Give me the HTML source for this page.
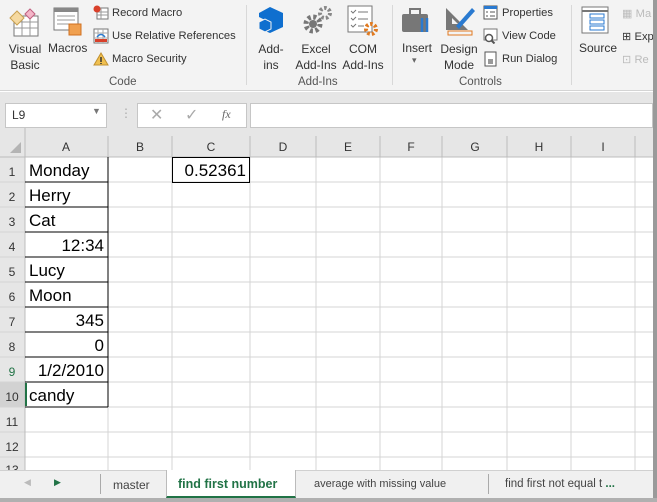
<!DOCTYPE html>
<html><head><meta charset="utf-8"><style>
*{margin:0;padding:0;box-sizing:border-box}
body{width:657px;height:502px;overflow:hidden;background:#fff;font-family:"Liberation Sans",sans-serif;position:relative;font-size:12px;color:#333}
.a{position:absolute}
.rib{left:0;top:0;width:653px;height:91px;background:#f3f3f3;border-bottom:1px solid #d4d4d4}
.t{position:absolute;font-size:12px;color:#333;white-space:nowrap}
.s{font-size:11.2px}
.c{text-align:center}
.grp{position:absolute;top:76px;font-size:11.5px;color:#555}
.sep{position:absolute;top:5px;width:1px;height:80px;background:#d8d8d8}
</style></head><body>
<div class="a rib"></div>
<!-- Code group -->
<svg class="a" style="left:8px;top:6px" width="32" height="32"><rect x="6" y="10" width="24" height="20" fill="#fff" stroke="#777"/><path d="M6 16h24M6 22h24M14 10v20M22 10v20" stroke="#999"/><path d="M2 12l7-7 7 7-7 7z" fill="#f5d9a0" stroke="#c9a050"/><path d="M17 8l5-5 5 5-5 5z" fill="#f4b6c8" stroke="#c06080"/></svg>
<div class="t c" style="left:2px;top:41px;width:46px;line-height:16px">Visual<br>Basic</div>
<svg class="a" style="left:52px;top:6px" width="32" height="32"><rect x="2" y="2" width="24" height="22" fill="#fff" stroke="#777"/><rect x="2" y="2" width="24" height="4" fill="#888"/><path d="M5 10h18M5 14h18M5 18h12" stroke="#999"/><rect x="17" y="18" width="12" height="11" fill="#f0a050" stroke="#d07020"/></svg>
<div class="t" style="left:48px;top:41px">Macros</div>
<svg class="a" style="left:93px;top:5px" width="16" height="16"><rect x="4" y="3" width="11" height="11" fill="#fff" stroke="#777"/><path d="M4 7h11M4 10h11M8 3v11" stroke="#999"/><circle cx="4" cy="4" r="3.5" fill="#d9402a"/></svg>
<div class="t s" style="left:112px;top:7px">Record Macro</div>
<svg class="a" style="left:93px;top:28px" width="16" height="16"><rect x="1" y="1" width="14" height="14" fill="#fff" stroke="#777"/><path d="M1 5h14M1 10h14M5 1v14M10 1v14" stroke="#aaa"/><path d="M4 9q4-5 8 0" stroke="#2a7ad0" fill="none" stroke-width="1.5"/><rect x="2" y="11" width="12" height="3" fill="#d9402a"/></svg>
<div class="t s" style="left:112px;top:30px">Use Relative References</div>
<svg class="a" style="left:93px;top:51px" width="16" height="16"><path d="M8 2l7 12H1z" fill="#f0c050" stroke="#c09030"/><path d="M8 6v5M8 12v1" stroke="#333" stroke-width="1.5"/></svg>
<div class="t s" style="left:112px;top:53px">Macro Security</div>
<div class="grp" style="left:109px">Code</div>
<div class="sep" style="left:246px"></div>
<!-- Add-ins -->
<svg class="a" style="left:256px;top:6px" width="30" height="30"><path d="M14 1l13 6v14l-13 6-5-2V14l-6-3 0-4z" fill="#0f6fcf"/><path d="M3 16l6-3 6 3v7l-6 3-6-3z" fill="#0f6fcf" stroke="#f3f3f3"/></svg>
<div class="t c" style="left:252px;top:41px;width:38px;line-height:16px">Add-<br>ins</div>
<svg class="a" style="left:301px;top:4px" width="32" height="32"><circle cx="12" cy="20" r="7" fill="none" stroke="#777" stroke-width="5" stroke-dasharray="3 2.5"/><circle cx="12" cy="20" r="4" fill="#777"/><circle cx="24" cy="9" r="5" fill="none" stroke="#888" stroke-width="4" stroke-dasharray="2.5 2"/></svg>
<div class="t c" style="left:293px;top:41px;width:46px;line-height:16px">Excel<br>Add-Ins</div>
<svg class="a" style="left:347px;top:5px" width="32" height="32"><rect x="1" y="1" width="24" height="26" fill="#fff" stroke="#777"/><path d="M4 6l2 2 3-3M4 13l2 2 3-3M4 20l2 2 3-3M11 7h10M11 14h10M11 21h6" stroke="#777" fill="none"/><circle cx="24" cy="24" r="5" fill="none" stroke="#e07a20" stroke-width="4" stroke-dasharray="2.5 2"/></svg>
<div class="t c" style="left:340px;top:41px;width:46px;line-height:16px">COM<br>Add-Ins</div>
<div class="grp" style="left:298px">Add-Ins</div>
<div class="sep" style="left:392px"></div>
<!-- Controls -->
<svg class="a" style="left:401px;top:6px" width="32" height="30"><rect x="1" y="8" width="26" height="18" rx="2" fill="#777"/><rect x="9" y="3" width="10" height="6" fill="none" stroke="#777" stroke-width="2"/><path d="M21 12v14M26 12v14" stroke="#2a7ad0" stroke-width="2.5"/></svg>
<div class="t c" style="left:398px;top:41px;width:38px">Insert</div>
<div class="t" style="left:412px;top:55px;font-size:9px;color:#666">▾</div>
<svg class="a" style="left:444px;top:4px" width="34" height="32"><path d="M2 4v22h22z" fill="#777"/><path d="M8 14v6h6z" fill="#f3f3f3"/><path d="M12 22l16-18 3 3-16 18z" fill="#2a7ad0"/><rect x="4" y="27" width="24" height="4" fill="none" stroke="#e07a20"/></svg>
<div class="t c" style="left:438px;top:41px;width:42px;line-height:16px">Design<br>Mode</div>
<svg class="a" style="left:483px;top:5px" width="16" height="16"><rect x="1" y="1" width="13" height="13" fill="#fff" stroke="#555"/><rect x="1" y="1" width="13" height="3" fill="#2a7ad0"/><path d="M3 7h2M7 7h5M3 11h2M7 11h5" stroke="#555"/></svg>
<div class="t s" style="left:502px;top:7px">Properties</div>
<svg class="a" style="left:483px;top:28px" width="16" height="16"><rect x="1" y="1" width="13" height="11" fill="#fff" stroke="#777"/><circle cx="6" cy="10" r="3.5" fill="#fff" stroke="#555" stroke-width="1.5"/><path d="M8.5 12.5l3 3" stroke="#555" stroke-width="2"/></svg>
<div class="t s" style="left:502px;top:30px">View Code</div>
<svg class="a" style="left:483px;top:51px" width="16" height="16"><rect x="2" y="1" width="11" height="14" fill="#fff" stroke="#555"/><rect x="5" y="8" width="5" height="5" fill="#999"/></svg>
<div class="t s" style="left:502px;top:53px">Run Dialog</div>
<div class="grp" style="left:459px">Controls</div>
<div class="sep" style="left:571px"></div>
<svg class="a" style="left:581px;top:6px" width="30" height="30"><rect x="1" y="1" width="26" height="26" fill="#fff" stroke="#777"/><path d="M1 5h26" stroke="#777" stroke-width="2"/><rect x="9" y="8" width="14" height="4" fill="none" stroke="#2a7ad0"/><rect x="9" y="14" width="14" height="4" fill="none" stroke="#2a7ad0"/><rect x="9" y="20" width="14" height="4" fill="none" stroke="#2a7ad0"/></svg>
<div class="t" style="left:579px;top:41px">Source</div>
<div class="t s" style="left:622px;top:7px;color:#bbb">▦ Ma</div>
<div class="t s" style="left:622px;top:30px">⊞ Exp</div>
<div class="t s" style="left:622px;top:53px;color:#bbb">⊡ Re</div>
<!-- formula bar area -->
<div class="a" style="left:0;top:92px;width:653px;height:36px;background:#e6e6e6"></div>
<div class="a" style="left:5px;top:103px;width:102px;height:25px;background:#fff;border:1px solid #c6c6c6"></div>
<div class="t" style="left:12px;top:108px;font-size:12px">L9</div>
<div class="t" style="left:92px;top:106px;font-size:9px;color:#777">▼</div>
<div class="t" style="left:120px;top:106px;color:#aaa">⋮</div>
<div class="a" style="left:137px;top:103px;width:110px;height:25px;background:#fff;border:1px solid #c6c6c6"></div>
<div class="t" style="left:150px;top:105px;font-size:16px;color:#aaa">✕</div>
<div class="t" style="left:185px;top:105px;font-size:16px;color:#aaa">✓</div>
<div class="t" style="left:222px;top:107px;font-family:'Liberation Serif',serif;font-style:italic;color:#666">fx</div>
<div class="a" style="left:250px;top:103px;width:403px;height:25px;background:#fff;border:1px solid #c6c6c6"></div>
<!-- grid -->
<svg class="a" style="left:0;top:128px" width="653" height="342">
<rect x="0" y="0" width="653" height="29" fill="#e6e6e6"/>
<rect x="0" y="29" width="25" height="313" fill="#e6e6e6"/>
<rect x="0" y="254" width="25" height="25" fill="#d2d2d2"/>
<path d="M21 25L21 14 10 25z" fill="#b4b4b4"/>
<g stroke="#d4d4d4">
<path d="M25 29v313M108 29v313M172 29v313M250 29v313M316 29v313M380 29v313M442 29v313M507 29v313M571 29v313M635 29v313"/>
<path d="M0 54h653M0 79h653M0 104h653M0 129h653M0 154h653M0 179h653M0 204h653M0 229h653M0 254h653M0 279h653M0 304h653M0 329h653"/>
</g>
<g stroke="#bcbcbc"><path d="M25 0v29M108 8v21M172 8v21M250 8v21M316 8v21M380 8v21M442 8v21M507 8v21M571 8v21M635 8v21M0 29h653"/></g>
<path d="M25 29v313" stroke="#bcbcbc"/>
<path d="M25 54h83M25 79h83M25 104h83M25 129h83M25 154h83M25 179h83M25 204h83M25 229h83M25 254h83M25 279h83M108 29v250M25 279h83" stroke="#000"/>
<rect x="172.5" y="29.5" width="77" height="25" fill="none" stroke="#000"/>
<path d="M26 255v23" stroke="#217346" stroke-width="2"/>
<g font-family="Liberation Sans" font-size="12" fill="#333" text-anchor="middle">
<text x="66" y="23">A</text><text x="140" y="23">B</text><text x="211" y="23">C</text><text x="283" y="23">D</text><text x="348" y="23">E</text><text x="411" y="23">F</text><text x="475" y="23">G</text><text x="539" y="23">H</text><text x="603" y="23">I</text>
<text x="12" y="48">1</text><text x="12" y="73">2</text><text x="12" y="98">3</text><text x="12" y="123">4</text><text x="12" y="148">5</text><text x="12" y="173">6</text><text x="12" y="198">7</text><text x="12" y="223">8</text><text x="12" y="248" fill="#217346">9</text><text x="12" y="273">10</text><text x="12" y="298">11</text><text x="12" y="323">12</text><text x="12" y="346">13</text>
</g>
<g font-family="Liberation Sans" font-size="17" fill="#000">
<text x="29" y="48">Monday</text><text x="29" y="73">Herry</text><text x="29" y="98">Cat</text>
<text x="104" y="123" text-anchor="end">12:34</text><text x="29" y="148">Lucy</text><text x="29" y="173">Moon</text>
<text x="104" y="198" text-anchor="end">345</text><text x="104" y="223" text-anchor="end">0</text>
<text x="104" y="248" text-anchor="end">1/2/2010</text><text x="29" y="273">candy</text>
<text x="246" y="48" text-anchor="end">0.52361</text>
</g>
</svg>
<div class="a" style="left:653px;top:0;width:4px;height:502px;background:#9a9a9a"></div>
<!-- tabs -->
<div class="a" style="left:0;top:470px;width:653px;height:28px;background:#f0f0f0;border-top:1px solid #d0d0d0"></div>
<div class="a" style="left:0;top:498px;width:657px;height:4px;background:#b0b0b0"></div>
<div class="t" style="left:24px;top:477px;font-size:9px;color:#bbb">◀</div>
<div class="t" style="left:54px;top:477px;font-size:9px;color:#217346">▶</div>
<div class="a" style="left:100px;top:474px;width:1px;height:20px;background:#aaa"></div>
<div class="t" style="left:113px;top:478px;color:#444">master</div>
<div class="a" style="left:166px;top:470px;width:130px;height:28px;background:#fff;border-left:1px solid #bbb;border-right:1px solid #bbb;border-bottom:2px solid #217346"></div>
<div class="t" style="left:178px;top:477px;font-weight:bold;font-size:12.5px;color:#217346">find first number</div>
<div class="t" style="left:314px;top:478px;color:#444;font-size:11px">average with missing value</div>
<div class="a" style="left:488px;top:474px;width:1px;height:20px;background:#aaa"></div>
<div class="t" style="left:505px;top:478px;color:#444;font-size:11.5px">find first not equal t <b style="color:#217346">...</b></div>
</body></html>
